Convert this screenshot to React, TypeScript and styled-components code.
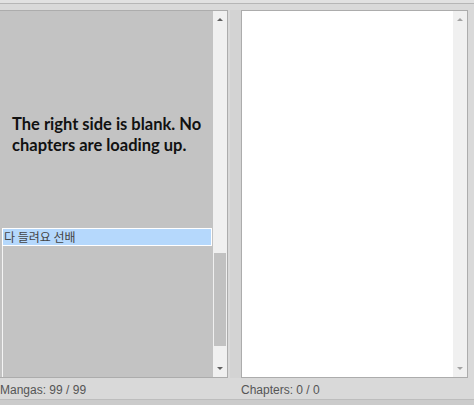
import React from 'react';
import styled, { createGlobalStyle } from 'styled-components';

const GlobalStyle = createGlobalStyle`
  html, body {
    margin: 0;
    padding: 0;
    background: #d9d9d9;
    overflow: hidden;
  }
`;

const Window = styled.div`
  display: flex;
  flex-direction: column;
  width: 474px;
  height: 405px;
  background: #d9d9d9;
  font-family: 'Liberation Sans', Arial, sans-serif;
`;

const TopStrip = styled.div`
  height: 3px;
  background: #e1e1e1;
  border-bottom: 1px solid #b6b6b6;
  margin-bottom: 6px;
`;

const Panes = styled.div`
  display: flex;
  height: 368px;
`;

const ListBox = styled.div<{ $width: number; $bg: string }>`
  display: flex;
  width: ${(p) => p.$width}px;
  background: ${(p) => p.$bg};
  border: 1px solid #acacac;
  box-sizing: border-box;
`;

const LeftBox = styled(ListBox)`
  border-left: none;
`;

const ListContent = styled.div`
  flex: 1;
  display: flex;
  flex-direction: column;
  min-width: 0;
`;

const NoteArea = styled.div`
  height: 217px;
  box-sizing: border-box;
  padding: 103px 8px 0 12px;
`;

const Note = styled.p`
  margin: 0;
  font-family: Lato, 'Open Sans', sans-serif;
  font-weight: 700;
  font-size: 16.5px;
  line-height: 21px;
  color: #111;
`;

const SelectedRow = styled.div`
  height: 18px;
  box-sizing: border-box;
  margin: 0 1px 0 2px;
  border: 1px solid #ffffff;
  background: #b5d8fc;
  padding-left: 1px;
  font-family: 'Noto Sans CJK KR', sans-serif;
  font-size: 12px;
  line-height: 15px;
  color: #444;
`;

const RestArea = styled.div`
  flex: 1;
  margin-left: 2px;
  border-left: 1px solid #f4f4f4;
`;

const Scrollbar = styled.div`
  width: 14px;
  display: flex;
  flex-direction: column;
  align-items: center;
  background: #f0f0f0;
`;

const Arrow = styled.div<{ $down?: boolean; $disabled?: boolean }>`
  height: 17px;
  width: 100%;
  display: flex;
  align-items: center;
  justify-content: center;

  &::before {
    content: '';
    width: 0;
    height: 0;
    border-left: 3.5px solid transparent;
    border-right: 3.5px solid transparent;
    ${(p) =>
      p.$down
        ? `border-top: 3.5px solid ${p.$disabled ? '#a3a3a3' : '#606060'};`
        : `border-bottom: 3.5px solid ${p.$disabled ? '#a3a3a3' : '#606060'};`}
  }
`;

const Track = styled.div`
  flex: 1;
  width: 100%;
  display: flex;
  flex-direction: column;
  justify-content: flex-end;
  padding: 0 1px 14px;
  box-sizing: border-box;
`;

const Thumb = styled.div<{ $height: number }>`
  height: ${(p) => p.$height}px;
  background: #c1c1c1;
`;

const Splitter = styled.div`
  width: 13px;
  display: flex;
  justify-content: flex-end;
`;

const SplitterStripe = styled.div`
  width: 11px;
  background: #d3d3d3;
`;

const StatusBar = styled.div`
  display: flex;
  height: 22px;
  padding-top: 3px;
  box-sizing: border-box;
  align-items: center;
  border-bottom: 1px solid #bdbdbd;
`;

const StatusLabel = styled.span<{ $width: number }>`
  width: ${(p) => p.$width}px;
  font-size: 12px;
  color: #555;
  white-space: nowrap;
`;

const Footer = styled.div`
  flex: 1;
  background: #cbcbcb;
`;

export default function App() {
  return (
    <>
      <GlobalStyle />
      <Window>
        <TopStrip />
        <Panes>
          <LeftBox $width={228} $bg="#c3c3c3">
            <ListContent>
              <NoteArea>
                <Note>The right side is blank. No chapters are loading up.</Note>
              </NoteArea>
              <SelectedRow>다 들려요 선배</SelectedRow>
              <RestArea />
            </ListContent>
            <Scrollbar>
              <Arrow />
              <Track>
                <Thumb $height={93} />
              </Track>
              <Arrow $down />
            </Scrollbar>
          </LeftBox>
          <Splitter>
            <SplitterStripe />
          </Splitter>
          <ListBox $width={227} $bg="#ffffff">
            <ListContent />
            <Scrollbar>
              <Arrow $disabled />
              <Track />
              <Arrow $down $disabled />
            </Scrollbar>
          </ListBox>
        </Panes>
        <StatusBar>
          <StatusLabel $width={241}>Mangas: 99 / 99</StatusLabel>
          <StatusLabel $width={233}>Chapters: 0 / 0</StatusLabel>
        </StatusBar>
        <Footer />
      </Window>
    </>
  );
}
